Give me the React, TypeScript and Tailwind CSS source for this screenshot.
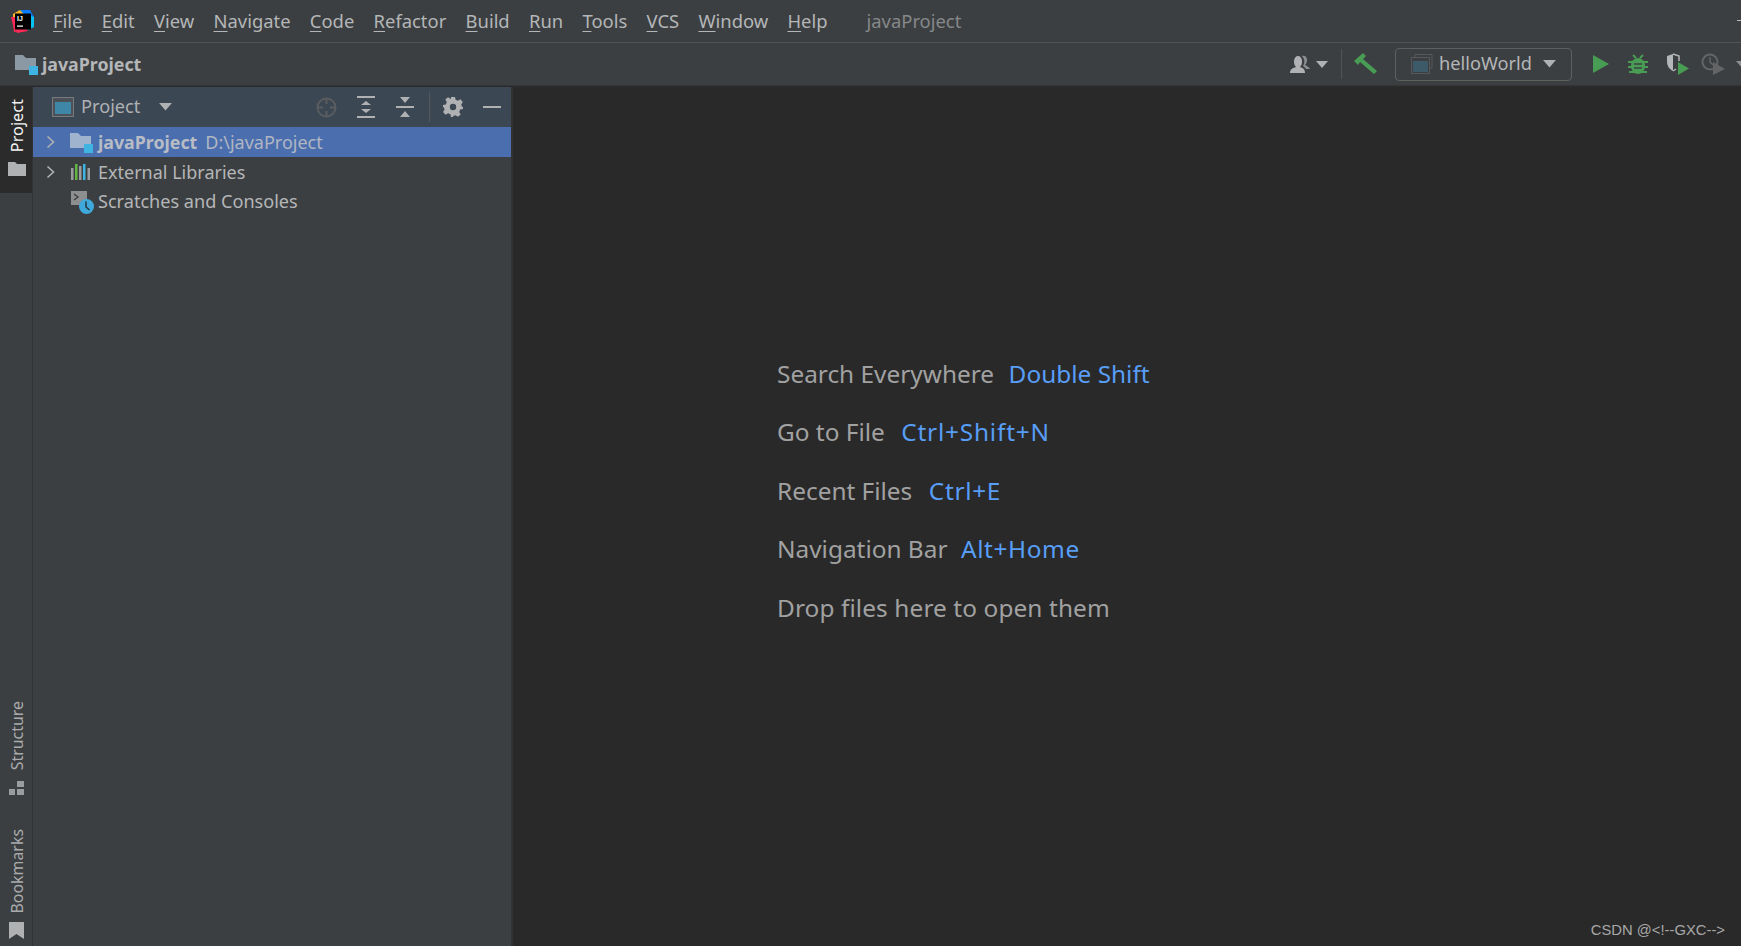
const font = "font-['Noto_Sans','Open_Sans',sans-serif]";

const menus: [string, string][] = [
  ["F", "ile"],
  ["E", "dit"],
  ["V", "iew"],
  ["N", "avigate"],
  ["C", "ode"],
  ["R", "efactor"],
  ["B", "uild"],
  ["R", "un"],
  ["T", "ools"],
  ["V", "CS"],
  ["W", "indow"],
  ["H", "elp"],
];

const hints: [string, string, string][] = [
  ["Search Everywhere", "Double Shift", ""],
  ["Go to File", "Ctrl+Shift+N", "tracking-[0.8px] ml-[2px]"],
  ["Recent Files", "Ctrl+E", "tracking-[0.7px] ml-[2px]"],
  ["Navigation Bar", "Alt+Home", "tracking-[0.6px] ml-[-1px]"],
];

function Logo() {
  return (
    <svg width="25" height="25" viewBox="0 0 25 25" className="shrink-0">
      <path d="M3 5 L10 1 L15 3 L8 12 L3 10Z" fill="#fcb827" />
      <path d="M1 8 L8 8 L9 22 L4 23 L3 16Z" fill="#fe2857" />
      <path d="M10 1 L20 1 L24 8 L18 10Z" fill="#087cfa" />
      <path d="M18 6 L24 8 L24 18 L18 21Z" fill="#07c3f2" />
      <path d="M5 17 L14 17 L18 22 L7 24Z" fill="#fe2857" />
      <rect x="5" y="4.5" width="16" height="16" fill="#000" />
      <text x="7" y="12" fontSize="7" fontWeight="700" fill="#fff" fontFamily="Liberation Sans">IJ</text>
      <rect x="7" y="16.5" width="6" height="1.2" fill="#fff" />
    </svg>
  );
}

function ProjectFolder({ light }: { light?: boolean }) {
  const c = light ? "#9fb3cf" : "#8b99a5";
  return (
    <svg width="23" height="21" viewBox="0 0 23 21" className="shrink-0">
      <path d="M0 1h8l3 3h10v12H0z" fill={c} />
      <rect x="14" y="12" width="9" height="9" fill="#3fb4e2" />
    </svg>
  );
}

function Caret({ w = 12, color = "#afb1b3" }: { w?: number; color?: string }) {
  return (
    <svg width={w} height={w / 2 + 1} viewBox="0 0 12 7" className="shrink-0">
      <path d="M0 0h12L6 7z" fill={color} />
    </svg>
  );
}

function Chevron() {
  return (
    <svg width="10" height="14" viewBox="0 0 10 14" className="shrink-0">
      <path d="M1.5 1.5 L7.5 7 L1.5 12.5" stroke="#afb1b3" strokeWidth="1.6" fill="none" />
    </svg>
  );
}

function Libraries() {
  return (
    <svg width="22" height="18" viewBox="0 0 22 18" className="shrink-0">
      <rect x="1" y="5" width="2.5" height="12" fill="#9a9c9e" />
      <rect x="5" y="1" width="2.5" height="16" fill="#62b543" />
      <rect x="9" y="3" width="2.5" height="14" fill="#9a9c9e" />
      <rect x="13" y="1" width="2.5" height="16" fill="#3fb4e2" />
      <rect x="17.5" y="5" width="2.5" height="12" fill="#9a9c9e" />
    </svg>
  );
}

function Scratches() {
  return (
    <svg width="24" height="24" viewBox="0 0 24 24" className="shrink-0">
      <path d="M1 1h16v14H1z" fill="#8c8e90" />
      <path d="M4 4 L8 7 L4 10" stroke="#3c3f41" strokeWidth="1.4" fill="none" />
      <circle cx="16.5" cy="16.5" r="7.5" fill="#3fa9dc" />
      <path d="M16 11.5v5.5l3.5 3" stroke="#26333b" strokeWidth="1.5" fill="none" />
    </svg>
  );
}

function App() {
  return (
    <div className={`${font} w-full h-[946px] overflow-hidden flex flex-col bg-[#292929] text-[#afb1b3] relative`}>
      {/* menu bar */}
      <div className="h-[43px] shrink-0 bg-[#3c3f41] border-b border-[#505254] flex items-center pl-[10px] text-[18.4px] relative">
        <Logo />
        <div className="flex items-center gap-[19.3px] ml-[18px] text-[#b4b6b8]">
          {menus.map(([k, rest], i) => (
            <span key={i} className="whitespace-nowrap">
              <span className="underline underline-offset-[3px] decoration-1">{k}</span>
              {rest}
            </span>
          ))}
        </div>
        <span className="ml-[39px] text-[#85888a]">javaProject</span>
        <div className="absolute right-0 top-[20px] w-[4px] h-[1px] bg-[#bbbbbb]" />
      </div>

      {/* navigation bar + toolbar */}
      <div className="h-[43px] shrink-0 bg-[#3c3f41] flex items-center pl-[15px] border-b border-[#333537]">
        <ProjectFolder />
        <span className="ml-[4px] text-[17.8px] font-bold text-[#b4b6b8]">javaProject</span>
        <div className="ml-auto flex items-center mr-[-7px]">
          <svg width="21" height="19" viewBox="0 0 21 19">
            <path d="M0 18c0-4 3-5 6-6-2-2-2-4-2-6 0-3 2-5 4-5s4 2 4 5c0 2 0 4-2 6 3 1 5 2 5 6z" fill="#afb1b3" />
            <path d="M12 1c3-1 5 1 5 4 0 2-1 4-2 5 2 1 4 2 5 4h-4c-1-2-2-2-3-3 2-3 2-7-1-10z" fill="#8d8f91" />
          </svg>
          <span className="ml-[5px]"><Caret /></span>
          <div className="w-[1px] h-[30px] bg-[#515354] ml-[13px]" />
          <svg width="24" height="22" viewBox="0 0 24 22" className="ml-[12px]">
            <path d="M0 8 L9 0 L12 3 L9 6 L23 18 L20 21 L6 9 L4 12z" fill="#499c54" />
          </svg>
          <div className="ml-[17px] w-[177px] h-[33px] border border-[#5e6060] rounded-[4px] flex items-center pl-[15px]">
            <svg width="22" height="20" viewBox="0 0 22 20" className="shrink-0">
              <path d="M4 3V0.5h17V14h-2" stroke="#56595b" strokeWidth="1" fill="none" />
              <rect x="0.5" y="3.5" width="18" height="16" fill="#3c3f41" stroke="#56595b" />
              <rect x="2" y="7" width="15" height="11" fill="#3d5a68" />
            </svg>
            <span className="ml-[6px] text-[18.2px] text-[#b4b6b8]">helloWorld</span>
            <span className="ml-[11px]"><Caret w={13} /></span>
          </div>
          <svg width="16" height="18" viewBox="0 0 16 18" className="ml-[21px]">
            <path d="M0 0 L16 9 L0 18z" fill="#499c54" />
          </svg>
          <svg width="20" height="21" viewBox="0 0 20 21" className="ml-[19px]">
            <path d="M5 1l3 3M15 1l-3 3" stroke="#499c54" strokeWidth="2" />
            <ellipse cx="10" cy="12" rx="7" ry="8" fill="#499c54" />
            <path d="M0 8h20M0 13h20M1 18h18" stroke="#499c54" strokeWidth="2" />
            <path d="M6 10h8M6 14h8" stroke="#3c3f41" strokeWidth="1.5" />
          </svg>
          <svg width="23" height="22" viewBox="0 0 23 22" className="ml-[18px]">
            <path d="M1 3 L7 1 V18 C3 16 1 13 1 8z" fill="#b4b6b8" />
            <path d="M7 1 L13 3 V8 M7 18 L10 16" stroke="#b4b6b8" strokeWidth="1.5" fill="none" />
            <path d="M12 9 L23 15.5 L12 22z" fill="#499c54" />
          </svg>
          <svg width="24" height="22" viewBox="0 0 24 22" className="ml-[12px]">
            <circle cx="9" cy="9" r="7.5" stroke="#626466" strokeWidth="2" fill="none" />
            <path d="M9 4v5l3 3" stroke="#626466" strokeWidth="1.5" fill="none" />
            <path d="M12 9 L24 16 L12 22z" fill="#626466" />
          </svg>
          <span className="ml-[11px]"><Caret color="#8d8f91" /></span>
        </div>
      </div>

      <div className="flex-1 flex min-h-0 border-t border-[#2b2b2b]">
        {/* tool window strip */}
        <div className="w-[33px] shrink-0 bg-[#3c3f41] border-r border-[#323232] flex flex-col justify-between">
          <div className="h-[106px] bg-[#2b2b2b] flex flex-col items-center pt-[12px] pl-[1px]">
            <span className="[writing-mode:vertical-rl] rotate-180 text-[16.3px] leading-[18px] text-[#f2f2f2]">Project</span>
            <svg width="18" height="14" viewBox="0 0 18 14" className="mt-[10px]">
              <path d="M0 0h7l2 2h9v12H0z" fill="#afb1b3" />
            </svg>
          </div>
          <div className="flex flex-col items-center pb-[7px] pl-[1px]">
            <span className="[writing-mode:vertical-rl] rotate-180 text-[15.9px] leading-[18px] text-[#a9abad]">Structure</span>
            <svg width="15" height="14" viewBox="0 0 15 14" className="mt-[10px]">
              <rect x="8" y="0" width="7" height="6" fill="#9a9c9e" />
              <rect x="0" y="8" width="6" height="6" fill="#9a9c9e" />
              <rect x="8" y="8" width="7" height="6" fill="#9a9c9e" />
            </svg>
            <span className="[writing-mode:vertical-rl] rotate-180 text-[15.9px] leading-[18px] text-[#a9abad] mt-[34px]">Bookmarks</span>
            <svg width="15" height="17" viewBox="0 0 15 17" className="mt-[9px]">
              <path d="M0 0h15v17l-7.5-5L0 17z" fill="#afb1b3" />
            </svg>
          </div>
        </div>

        {/* project panel */}
        <div className="w-[480px] shrink-0 bg-[#3c3f41] border-r-2 border-[#323232] flex flex-col">
          <div className="h-[40px] shrink-0 bg-[#3c4754] flex items-center pl-[19px] pr-[10px]">
            <svg width="22" height="20" viewBox="0 0 22 20" className="shrink-0">
              <rect x="0.5" y="0.5" width="21" height="19" fill="#4b5157" stroke="#787b7d" />
              <rect x="3" y="5" width="16" height="12" fill="#3f87a6" />
            </svg>
            <span className="ml-[7px] text-[18.2px] text-[#afb1b3]">Project</span>
            <span className="ml-[19px]"><Caret w={13} /></span>
            <div className="ml-auto flex items-center">
              <svg width="21" height="21" viewBox="0 0 21 21" className="mr-[2px]">
                <circle cx="10.5" cy="10.5" r="9" stroke="#5a5d5f" strokeWidth="2" fill="none" />
                <path d="M10.5 1v6M10.5 14v6M1 10.5h6M14 10.5h6" stroke="#5a5d5f" strokeWidth="2" />
              </svg>
              <svg width="18" height="22" viewBox="0 0 18 22" className="ml-[18px]">
                <path d="M0 1h18M0 21h18" stroke="#afb1b3" strokeWidth="2" />
                <path d="M4 9 L9 5 L14 9zM4 13 L9 17 L14 13z" fill="#afb1b3" />
              </svg>
              <svg width="18" height="22" viewBox="0 0 18 22" className="ml-[21px]">
                <path d="M0 11h18" stroke="#afb1b3" strokeWidth="2" />
                <path d="M4 1 L9 7 L14 1zM4 21 L9 15 L14 21z" fill="#afb1b3" />
              </svg>
              <div className="w-[1px] h-[30px] bg-[#55585a] ml-[15px]" />
              <svg width="20" height="20" viewBox="0 0 20 20" className="ml-[13px]">
                <path d="M8 0h4l.6 2.8 2.3 1 2.5-1.5 2.4 2.8-1.6 2.4.8 2.3L20 10v2l-2.8.6-1 2.3 1.5 2.5-2.8 2.4-2.4-1.6-2.3.8L10 20H8l-.6-2.8-2.3-1-2.5 1.5L0 15l1.6-2.4-.8-2.3L0 10V8l2.8-.6 1-2.3L2.3 2.6 5 .2l2.4 1.6L8 2z" fill="#afb1b3" />
                <circle cx="10" cy="10" r="3.2" fill="#3c4754" />
              </svg>
              <div className="w-[18px] h-[2px] bg-[#afb1b3] ml-[20px]" />
            </div>
          </div>

          <div className="h-[30px] bg-[#4b6eaf] flex items-center pl-[13px]">
            <Chevron />
            <span className="ml-[14px]"><ProjectFolder light /></span>
            <span className="ml-[5px] text-[17.8px] font-bold text-[#b8bcc4]">javaProject</span>
            <span className="ml-[8px] text-[18px] text-[#b0b6c2]">D:\javaProject</span>
          </div>
          <div className="h-[30px] flex items-center pl-[13px]">
            <Chevron />
            <span className="ml-[14px]"><Libraries /></span>
            <span className="ml-[6px] text-[18px] text-[#b4b6b8]">External Libraries</span>
          </div>
          <div className="h-[30px] flex items-center pl-[37px]">
            <Scratches />
            <span className="ml-[4px] text-[18.1px] text-[#b4b6b8]">Scratches and Consoles</span>
          </div>
        </div>

        {/* empty editor */}
        <div className="flex-1 bg-[#292929] pl-[264px] pt-[268px] flex flex-col gap-[19.9px] text-[24.4px] leading-[38.5px]">
          {hints.map(([label, keys, cls]) => (
            <div key={label} className="flex gap-[14.5px] text-[#a1a1a1] whitespace-nowrap">
              <span>{label}</span>
              <span className={`text-[#589df6] ${cls}`}>{keys}</span>
            </div>
          ))}
          <div className="text-[#a1a1a1] tracking-[0.1px]">Drop files here to open them</div>
        </div>
      </div>

      <span className="absolute right-[16px] bottom-[5px] font-['Liberation_Sans',sans-serif] text-[14.8px] text-[#a8a8a8]">CSDN @&lt;!--GXC--&gt;</span>
    </div>
  );
}

export default App;
